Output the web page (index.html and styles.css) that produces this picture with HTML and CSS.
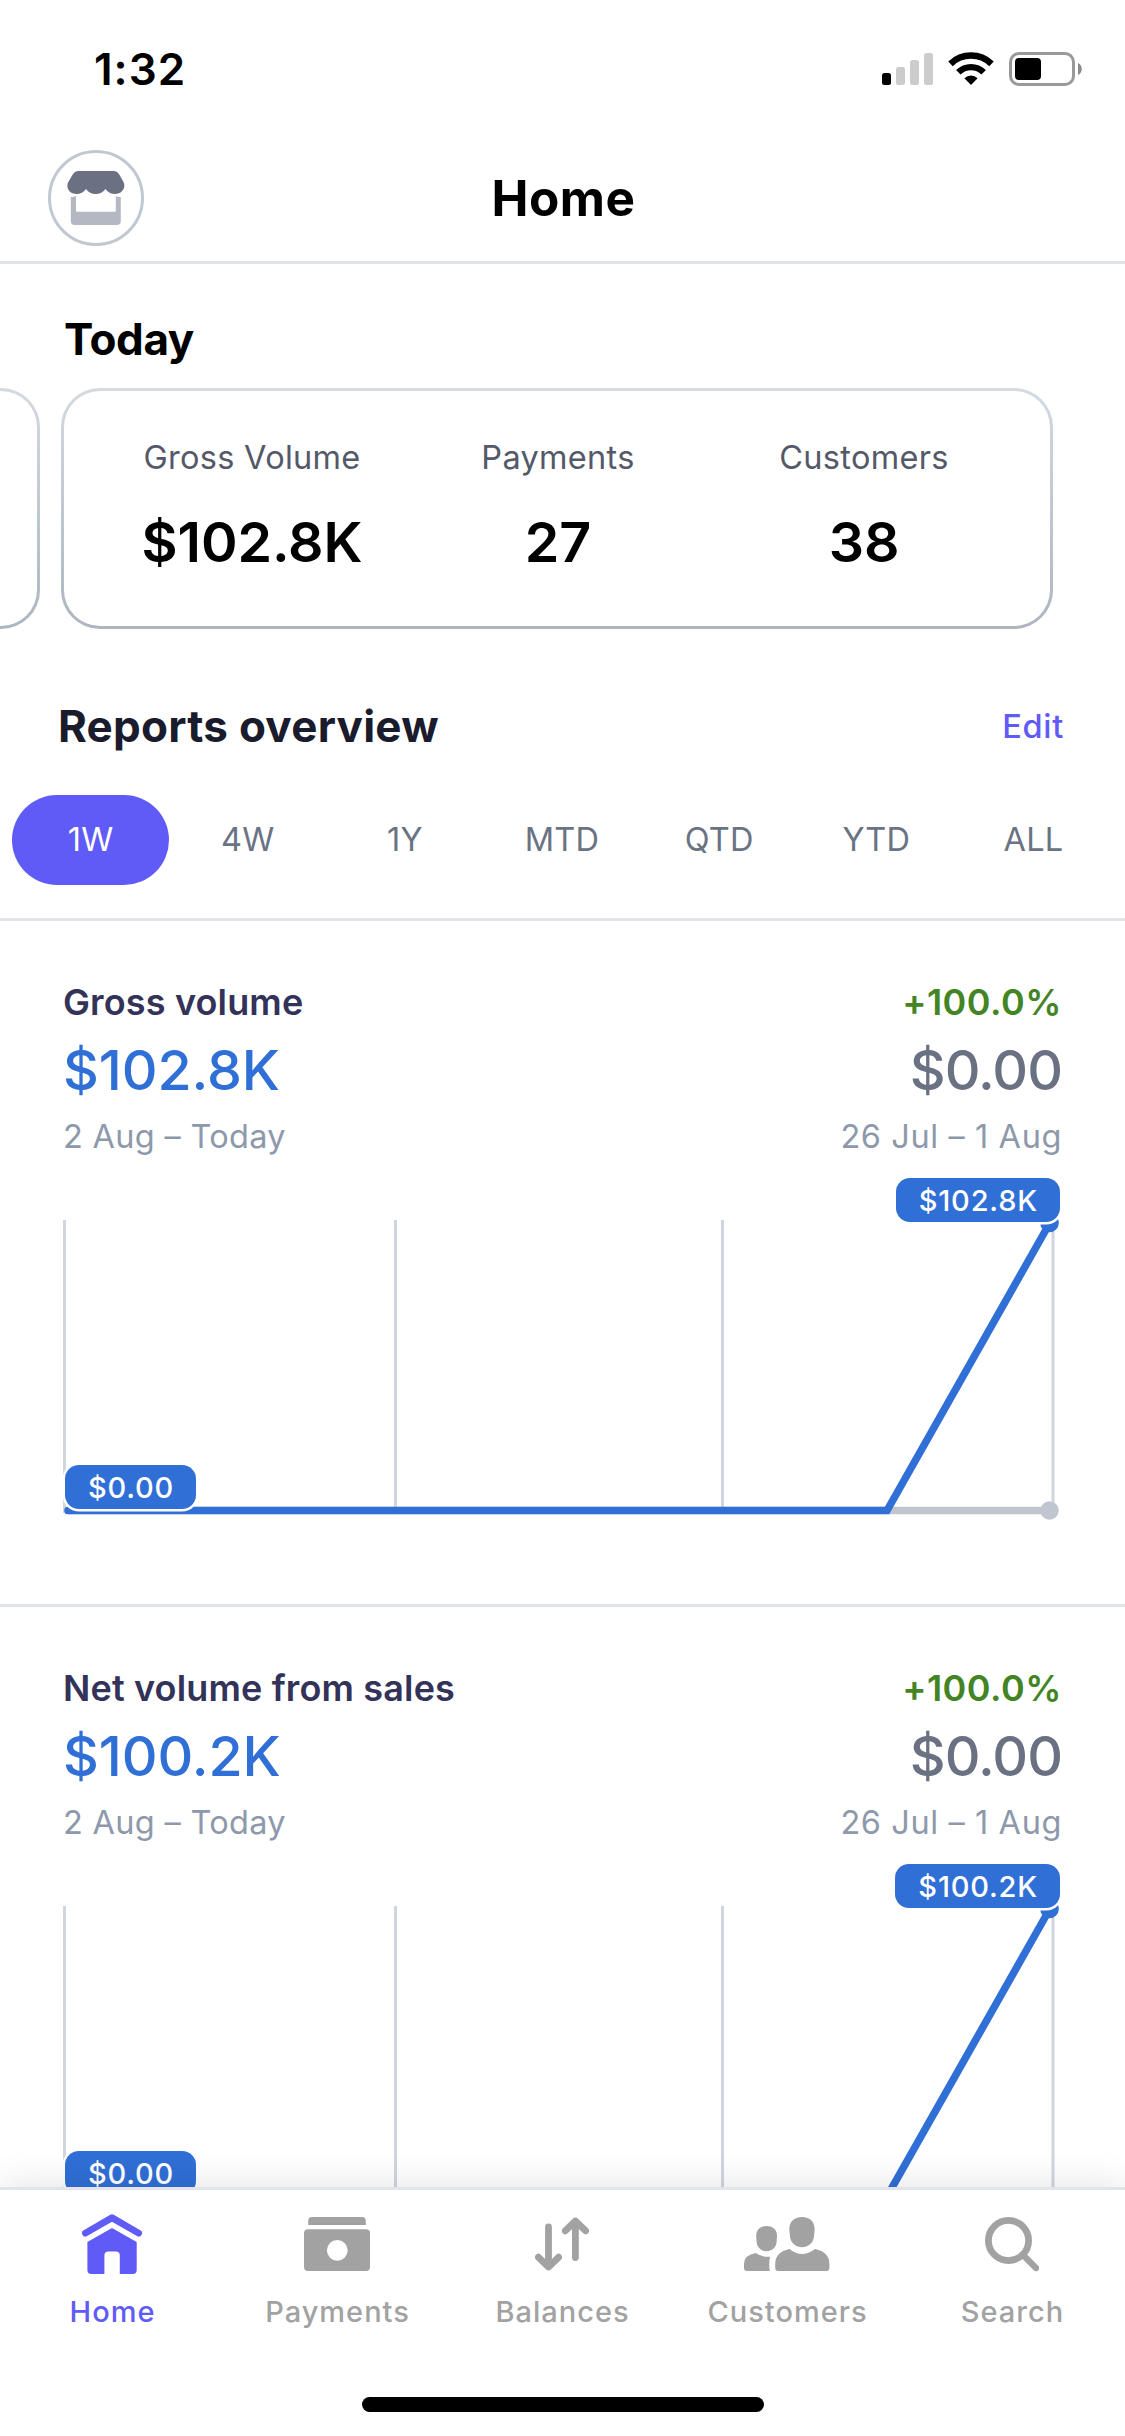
FILE: index.html
```html
<!DOCTYPE html>
<html lang="en">
<head>
    <meta charset="UTF-8">
    <meta name="viewport" content="width=device-width, initial-scale=1.0">
    <title>Home</title>
    <link rel="stylesheet" href="styles.css">
</head>
<body>
    <div class="screen">
        <!-- Status bar -->
        <div class="status-bar">
            <span class="time">1:32</span>
            <div class="status-icons">
                <svg class="signal" width="51" height="34" viewBox="0 0 51 34">
                    <rect x="0" y="21" width="9" height="12" rx="2.5" fill="#000"/>
                    <rect x="14" y="15" width="9" height="18" rx="2.5" fill="#ccc"/>
                    <rect x="28" y="8" width="9" height="25" rx="2.5" fill="#ccc"/>
                    <rect x="42" y="1" width="9" height="32" rx="2.5" fill="#ccc"/>
                </svg>
                <svg class="wifi" width="46" height="34" viewBox="0 0 46 34">
                    <path d="M2.5 11.8a29.5 29.5 0 0 1 41 0" fill="none" stroke="#000" stroke-width="6.6"/>
                    <path d="M10.3 20.2a18.3 18.3 0 0 1 25.4 0" fill="none" stroke="#000" stroke-width="6.4"/>
                    <path d="M23 33l-6.6-6.8a9.6 9.6 0 0 1 13.2 0z"/>
                </svg>
                <svg class="battery" width="74" height="34" viewBox="0 0 74 34">
                    <rect x="1.5" y="1.5" width="63" height="31" rx="8.5" fill="none" stroke="#999" stroke-width="3"/>
                    <rect x="6" y="6" width="26" height="22" rx="4" fill="#000"/>
                    <path d="M69 11c5 2 5 10 0 12z" fill="#8a8a8a"/>
                </svg>
            </div>
        </div>

        <!-- Nav bar -->
        <div class="nav-bar">
            <div class="store-btn">
                <svg width="58" height="54" viewBox="0 0 58 54">
                    <path d="M3.8 26q3 .2 5.200-1v14.800q0 1 1 1h37.800q1 0 1-1V25q2.200 1.200 5 1v24q0 4-4 4h-42q-4 0-4-4z" fill="#b4b8c2"/>
                    <path d="M11.500 0h35q3.500 0 5.500 3l4.500 8c2.600 5-1 12-8.500 12q-6 0-9.600-5-3.400 5-9.700 5T19 18q-3.500 5-9.500 5C2 23-1.500 16 1.300 11l4.700-8q2-3 5.500-3z" fill="#6b7183"/>
                </svg>
            </div>
            <h1>Home</h1>
        </div>

        <div class="content">
            <!-- Today -->
            <h2 class="today-title">Today</h2>
            <div class="cards">
                <div class="card"></div>
                <div class="card">
                    <div class="stat">
                        <span class="stat-label">Gross Volume</span>
                        <span class="stat-value">$102.8K</span>
                    </div>
                    <div class="stat">
                        <span class="stat-label">Payments</span>
                        <span class="stat-value">27</span>
                    </div>
                    <div class="stat">
                        <span class="stat-label">Customers</span>
                        <span class="stat-value">38</span>
                    </div>
                </div>
            </div>

            <!-- Reports -->
            <div class="reports-header">
                <h2>Reports overview</h2>
                <a class="edit">Edit</a>
            </div>
            <div class="ranges">
                <span class="range active">1W</span>
                <span class="range">4W</span>
                <span class="range">1Y</span>
                <span class="range">MTD</span>
                <span class="range">QTD</span>
                <span class="range">YTD</span>
                <span class="range">ALL</span>
            </div>

            <div class="report">
                <div class="report-info">
                    <div class="current">
                        <div class="name">Gross volume</div>
                        <div class="value">$102.8K</div>
                        <div class="period">2 Aug – Today</div>
                    </div>
                    <div class="previous">
                        <div class="change">+100.0%</div>
                        <div class="value">$0.00</div>
                        <div class="period">26 Jul – 1 Aug</div>
                    </div>
                </div>
                <div class="chart">
                    <svg width="1125" height="372" viewBox="0 0 1125 372">
                        <path d="M64.500 62v293M395.500 62v293M722.500 62v293M1053 62v293" stroke="#d0d6df" stroke-width="3"/>
                        <path d="M65 352.500h984" stroke="#c0c6d0" stroke-width="7.500"/>
                        <circle cx="1049.500" cy="352.500" r="9.300" fill="#c0c6d0"/>
                        <path d="M68 352.500h819l162.500-287" fill="none" stroke="#306fd6" stroke-width="7.500" stroke-linecap="round"/>
                        <circle cx="1049.500" cy="65" r="9.300" fill="#306fd6"/>
                    </svg>
                    <span class="tag tag-end">$102.8K</span>
                    <span class="tag tag-start">$0.00</span>
                </div>
            </div>

            <div class="report">
                <div class="report-info">
                    <div class="current">
                        <div class="name">Net volume from sales</div>
                        <div class="value">$100.2K</div>
                        <div class="period">2 Aug – Today</div>
                    </div>
                    <div class="previous">
                        <div class="change">+100.0%</div>
                        <div class="value">$0.00</div>
                        <div class="period">26 Jul – 1 Aug</div>
                    </div>
                </div>
                <div class="chart">
                    <svg width="1125" height="372" viewBox="0 0 1125 372">
                        <path d="M64.500 62v293M395.500 62v293M722.500 62v293M1053 62v293" stroke="#d0d6df" stroke-width="3"/>
                        <path d="M65 352.500h984" stroke="#c0c6d0" stroke-width="7.500"/>
                        <circle cx="1049.500" cy="352.500" r="9.300" fill="#c0c6d0"/>
                        <path d="M68 352.500h819l162.500-287" fill="none" stroke="#306fd6" stroke-width="7.500" stroke-linecap="round"/>
                        <circle cx="1049.500" cy="65" r="9.300" fill="#306fd6"/>
                    </svg>
                    <span class="tag tag-end">$100.2K</span>
                    <span class="tag tag-start">$0.00</span>
                </div>
            </div>
        </div>

        <!-- Tab bar -->
        <div class="tab-bar">
            <div class="tabs">
                <div class="tab active">
                    <svg width="60" height="60" viewBox="0 0 60 60">
                        <path d="M3.400 19.100L30 3.700l26.600 15.400" fill="none" stroke="currentColor" stroke-width="6.800" stroke-linecap="round" stroke-linejoin="round"/>
                        <path d="M30 14l24.700 14v28q0 4-4 4H37.800V41.500q0-4-4-4h-7.400q-4 0-4 4V60H9.400q-4 0-4-4V28z" fill="currentColor"/>
                    </svg>
                    <span>Home</span>
                </div>
                <div class="tab">
                    <svg width="66" height="54" viewBox="0 0 66 54">
                        <path d="M4.200 8V4q0-4 4-4h49.600q4 0 4 4v4z" fill="currentColor"/>
                        <path fill-rule="evenodd" d="M4 12.300h58q4 0 4 4V50q0 4-4 4H4q-4 0-4-4V16.300q0-4 4-4zM33.300 22.900a10.400 10.400 0 1 0 0 20.800 10.400 10.400 0 0 0 0-20.800z" fill="currentColor"/>
                    </svg>
                    <span>Payments</span>
                </div>
                <div class="tab">
                    <svg width="54" height="54" viewBox="0 0 54 54" fill="none" stroke="currentColor" stroke-width="6.800" stroke-linecap="round" stroke-linejoin="round">
                        <path d="M13.500 10v39.500M3.400 40.200l10.100 9.800 10.100-9.800"/>
                        <path d="M40.400 40.500V5M30.300 13.800L40.400 4l10.200 9.800"/>
                    </svg>
                    <span>Balances</span>
                </div>
                <div class="tab">
                    <svg width="86" height="54" viewBox="0 0 86 54" fill="currentColor">
                        <path d="M58 0c8 0 13 5 12.600 13l-.6 6.500C69.500 26 64 30.300 58 30.300S46.500 26 46 19.500L45.300 13C45 5 50 0 58 0z"/>
                        <path d="M45.500 32q12.500 10.200 25.500 0 14.400 3 14.400 15v4q0 3-3 3H34.200q-3 0-3-3v-4q0-12 14.300-15z"/>
                        <path d="M22.600 9c6.600 0 10.600 4 10.400 10.500l-.4 5.500c-.4 5.500-4.900 9.300-10 9.300s-9.600-3.800-10-9.300l-.4-5.500C12 13 16 9 22.600 9z"/>
                        <path d="M11.800 36q6.400 4.400 14.200 3.800-1.400 7-.2 14.200H3q-3 0-3-3v-4q0-9 11.800-11z"/>
                    </svg>
                    <span>Customers</span>
                </div>
                <div class="tab">
                    <svg width="54" height="54" viewBox="0 0 54 54" fill="none" stroke="currentColor">
                        <circle cx="23.500" cy="23.500" r="20.100" stroke-width="6.800"/>
                        <path d="M38 38l13 13" stroke-width="6.400" stroke-linecap="round"/>
                    </svg>
                    <span>Search</span>
                </div>
            </div>
            <div class="home-indicator"></div>
        </div>
    </div>
</body>
</html>
```
FILE: styles.css
```css
* {
    margin: 0;
    padding: 0;
    box-sizing: border-box;
}

body {
    font-family: Inter, 'Liberation Sans', sans-serif;
    background: #fff;
    color: #000;
}

svg {
    display: block;
}

.screen {
    width: 1125px;
    height: 2436px;
    display: flex;
    flex-direction: column;
    overflow: hidden;
}

/* Status bar */
.status-bar {
    display: flex;
    justify-content: space-between;
    align-items: center;
    height: 138px;
    padding: 0 42px 0 94px;
}

.time {
    font-size: 44px;
    font-weight: 600;
    letter-spacing: 1px;
}

.status-icons {
    display: flex;
}

.wifi {
    margin-left: 15px;
}

.battery {
    margin-left: 15px;
}

/* Nav bar */
.nav-bar {
    display: grid;
    grid-template-columns: 1fr auto 1fr;
    align-items: center;
    height: 126px;
    padding: 12px 46px 15px 48px;
    border-bottom: 3px solid #e0e4e8;
}

.store-btn {
    display: flex;
    align-items: center;
    justify-content: center;
    width: 96px;
    height: 96px;
    border: 3px solid #c0c8d2;
    border-radius: 50%;
}

.nav-bar h1 {
    font-size: 49.5px;
    font-weight: 700;
    letter-spacing: 0.5px;
    line-height: 60px;
}

.content {
    flex: 1;
    min-height: 0;
    overflow: hidden;
}

h2 {
    font-size: 44px;
    font-weight: 700;
    line-height: 54px;
}

.today-title {
    padding: 48px 64px 0;
    letter-spacing: -0.4px;
}

/* Cards carousel, scrolled to the second card */
.cards {
    display: flex;
    gap: 21px;
    margin: 22px 0 0 -952px;
}

.card {
    display: flex;
    flex: none;
    width: 992px;
    height: 241px;
    padding: 45px 33px 0 35px;
    border: 3px solid transparent;
    border-radius: 39px;
    background: linear-gradient(#fff, #fff) padding-box, linear-gradient(#d3dae0, #adb5c1) border-box;
}

.stat {
    display: flex;
    flex: 1;
    flex-direction: column;
    align-items: center;
    gap: 32px;
}

.stat-label {
    font-size: 32.5px;
    letter-spacing: 0.3px;
    line-height: 44px;
    color: #545969;
}

.stat-value {
    font-size: 55.5px;
    font-weight: 600;
    letter-spacing: -0.1px;
    line-height: 60px;
}

/* Reports */
.reports-header {
    display: flex;
    justify-content: space-between;
    align-items: center;
    margin-top: 70px;
    padding: 0 61px 0 58px;
    color: #1a1b2c;
}

.reports-header h2 {
    letter-spacing: 0.25px;
}

.edit {
    font-size: 32.5px;
    font-weight: 500;
    letter-spacing: 0.7px;
    color: #605bf6;
}

.ranges {
    display: flex;
    margin-top: 42px;
    padding: 0 13px 33px 12px;
    border-bottom: 3px solid #e0e4e8;
}

.range {
    flex: 1;
    text-align: center;
    font-size: 32.5px;
    letter-spacing: 0.2px;
    line-height: 90px;
    color: #6a7383;
}

.range.active {
    border-radius: 45px;
    background: #605bf6;
    color: #fff;
}

.report {
    height: 686px;
    padding-top: 59px;
    border-bottom: 3px solid #e0e4e8;
}

.report-info {
    display: flex;
    justify-content: space-between;
    padding: 0 63px;
}

.previous {
    text-align: right;
}

.name,
.change {
    font-size: 36px;
    font-weight: 600;
    line-height: 44px;
}

.name {
    letter-spacing: 0.15px;
    color: #333259;
}

.change {
    letter-spacing: 0.5px;
    color: #438424;
}

.value {
    margin: 16px 0;
    font-size: 55.5px;
    font-weight: 500;
    letter-spacing: -0.1px;
    line-height: 60px;
    color: #306fd6;
}

.previous .value {
    letter-spacing: -1px;
    color: #6a7183;
}

.period {
    font-size: 32.5px;
    letter-spacing: 0.3px;
    line-height: 42px;
    color: #8d99ab;
}

.previous .period {
    letter-spacing: 0.6px;
}

.chart {
    position: relative;
}

/* Value tags lie over the chart lines */
.tag {
    position: absolute;
    height: 44px;
    padding: 0 22px 0 23px;
    border-radius: 14px;
    box-shadow: 0 0 0 2.5px #fff;
    background: #306fd6;
    color: #fff;
    font-size: 29px;
    font-weight: 500;
    letter-spacing: 0.8px;
    line-height: 45px;
}

.tag-end {
    top: 20px;
    right: 65px;
}

.tag-start {
    top: 307px;
    left: 65px;
}

/* Tab bar */
.tab-bar {
    position: relative;
    height: 249px;
    padding-top: 24px;
    border-top: 3px solid #e1e4ea;
    background: #fff;
    box-shadow: 0 0 36px rgba(0, 0, 0, 0.12);
}

.tabs {
    display: flex;
}

.tab {
    display: flex;
    flex: 1;
    flex-direction: column;
    align-items: center;
    color: #a2a2a2;
}

.tab svg {
    height: 60px;
    margin-right: 2px;
}

.tab span {
    margin-top: 20px;
    font-size: 29px;
    font-weight: 500;
    letter-spacing: 1px;
    line-height: 36px;
}

.tab.active {
    color: #605bf6;
}

.home-indicator {
    width: 402px;
    height: 15px;
    margin: 67px auto 0;
    border-radius: 8px;
    background: #000;
}
```
